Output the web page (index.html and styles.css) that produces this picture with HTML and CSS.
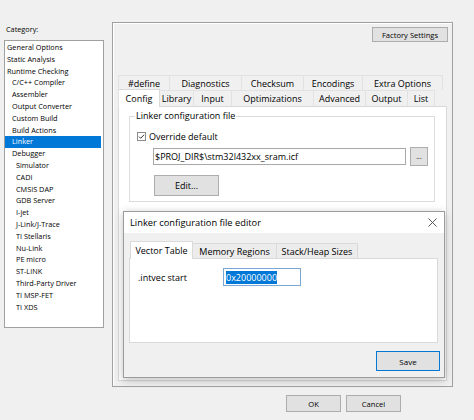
FILE: index.html
```html
<!DOCTYPE html>
<html lang="en">
<head>
  <meta charset="UTF-8">
  <title>Options for node</title>
  <link rel="stylesheet" href="styles.css">
</head>
<body>
  <div class="main">
    <aside class="category">
      <div class="category-label">Category:</div>
      <ul class="category-list">
        <li>General Options</li>
        <li>Static Analysis</li>
        <li>Runtime Checking</li>
        <li class="sub">C/C++ Compiler</li>
        <li class="sub">Assembler</li>
        <li class="sub">Output Converter</li>
        <li class="sub">Custom Build</li>
        <li class="sub">Build Actions</li>
        <li class="sub selected">Linker</li>
        <li class="sub">Debugger</li>
        <li class="sub2">Simulator</li>
        <li class="sub2">CADI</li>
        <li class="sub2">CMSIS DAP</li>
        <li class="sub2">GDB Server</li>
        <li class="sub2">I-jet</li>
        <li class="sub2">J-Link/J-Trace</li>
        <li class="sub2">TI Stellaris</li>
        <li class="sub2">Nu-Link</li>
        <li class="sub2">PE micro</li>
        <li class="sub2">ST-LINK</li>
        <li class="sub2">Third-Party Driver</li>
        <li class="sub2">TI MSP-FET</li>
        <li class="sub2">TI XDS</li>
      </ul>
    </aside>

    <section class="options">
      <div class="options-top">
        <div class="btn factory">Factory Settings</div>
      </div>

      <div class="tab-row back">
        <div class="tab">#define</div>
        <div class="tab">Diagnostics</div>
        <div class="tab">Checksum</div>
        <div class="tab">Encodings</div>
        <div class="tab">Extra Options</div>
      </div>
      <div class="tab-row front">
        <div class="tab active">Config</div>
        <div class="tab">Library</div>
        <div class="tab">Input</div>
        <div class="tab">Optimizations</div>
        <div class="tab">Advanced</div>
        <div class="tab">Output</div>
        <div class="tab">List</div>
      </div>

      <div class="tab-page">
        <fieldset class="group">
          <legend>Linker configuration file</legend>
          <div class="check-row">
            <svg width="9" height="9" viewBox="0 0 9 9">
              <rect x="0.5" y="0.5" width="8" height="8" fill="#fff" stroke="#8c8c8c"/>
              <path d="M2 4.6L3.7 6.3L7 2.8" fill="none" stroke="#333" stroke-width="1"/>
            </svg>
            <span>Override default</span>
          </div>
          <div class="file-row">
            <div class="field file-input">$PROJ_DIR$\stm32l432xx_sram.icf</div>
            <div class="btn browse">...</div>
          </div>
          <div class="btn edit-btn">Edit...</div>
        </fieldset>
      </div>

      <!-- modal editor window on top of the options page -->
      <div class="editor">
        <div class="editor-title">
          <span>Linker configuration file editor</span>
          <svg width="9" height="9" viewBox="0 0 9 9">
            <path d="M0.5 0.5L8.5 8.5M8.5 0.5L0.5 8.5" stroke="#444" stroke-width="0.9"/>
          </svg>
        </div>
        <div class="editor-body">
          <div class="dlg-tabs">
            <div class="dlg-tab active">Vector Table</div>
            <div class="dlg-tab">Memory Regions</div>
            <div class="dlg-tab">Stack/Heap Sizes</div>
          </div>
          <div class="dlg-page">
            <div class="dlg-row">
              <span class="dlg-label">.intvec start</span>
              <div class="field addr-input"><span class="sel">0x20000000</span></div>
            </div>
          </div>
          <div class="btn save-btn">Save</div>
        </div>
      </div>
    </section>
  </div>

  <div class="footer">
    <div class="btn footer-btn">OK</div>
    <div class="btn footer-btn">Cancel</div>
  </div>
</body>
</html>
```

FILE: styles.css
```css
body {
  margin: 0;
  width: 474px;
  height: 420px;
  overflow: hidden;
  background: #f0f0f0;
  font-family: "Open Sans", "Noto Sans", sans-serif;
  color: #000;
}
.main {
  display: flex;
  gap: 8px;
  padding: 22px 0 0 4px;
}

/* left category tree */
.category {
  width: 100px;
  display: flex;
  flex-direction: column;
}
.category-label {
  height: 18px;
  line-height: 14px;
  padding-left: 2px;
  font-size: 7.3px;
}
.category-list {
  list-style: none;
  margin: 0;
  padding: 1px 0 0;
  height: 288px;
  box-sizing: border-box;
  border: 1px solid #a0a0a0;
  background: #fff;
  font-size: 7.3px;
  line-height: 11.8px;
}
.category-list li {
  padding-left: 2px;
  margin-right: 2px;
  white-space: nowrap;
}
.category-list .sub {
  padding-left: 7px;
}
.category-list .sub2 {
  padding-left: 11px;
}
.category-list .selected {
  background: #0078d7;
  color: #fff;
}

/* right options frame */
.options {
  position: relative;
  width: 341px;
  height: 365px;
  box-sizing: border-box;
  border: 1px solid #a0a0a0;
  box-shadow: inset 1px 1px 0 #fff;
  padding: 4px 5px 0;
}
.options-top {
  display: flex;
  justify-content: flex-end;
  margin-right: -1px;
  margin-bottom: 33px;
}
.btn {
  box-sizing: border-box;
  display: flex;
  align-items: center;
  justify-content: center;
  background: #e1e1e1;
  border: 1px solid #adadad;
  font-size: 7.6px;
}
.factory {
  width: 76px;
  height: 15px;
}

.tab-row {
  display: grid;
  font-size: 9px;
}
.tab-row.back {
  grid-template-columns: 52px 72px 62px 59px 80px;
  height: 15px;
}
.tab-row.front {
  grid-template-columns: 42px 34px 38px 82px 52px 42px 27px;
  height: 16px;
}
.tab {
  display: flex;
  align-items: center;
  justify-content: center;
  box-sizing: border-box;
  border-top: 1px solid #e2e2e2;
  border-right: 1px solid #e2e2e2;
  background: #f0f0f0;
  white-space: nowrap;
}
.tab-row .tab:first-child {
  border-left: 1px solid #e2e2e2;
}
.tab.active {
  position: relative;
  z-index: 1;
  margin-top: -1px;
  margin-bottom: -1px;
  background: #fff;
  border-color: #d9d9d9;
}

.tab-page {
  height: 275px;
  box-sizing: border-box;
  background: #fff;
  border: 1px solid #d9d9d9;
  padding: 3px 11px 0 10px;
}
.group {
  margin: 0;
  min-width: 0;
  border: 1px solid #dcdcdc;
  padding: 0 6px 5px 7px;
}
.group legend {
  margin-left: -2px;
  padding: 0 1px;
  line-height: 12px;
  font-size: 9px;
}
.check-row {
  display: flex;
  align-items: center;
  gap: 3px;
  height: 12px;
  margin-top: 8px;
  font-size: 9px;
}
.file-row {
  display: flex;
  align-items: center;
  gap: 4px;
  margin: 5px 0 0 16px;
}
.field {
  box-sizing: border-box;
  display: flex;
  align-items: center;
  background: #fff;
  border: 1px solid #a8a8a8;
  font-size: 9px;
}
.file-input {
  width: 254px;
  height: 17px;
  padding-left: 1px;
}
.browse {
  width: 18px;
  height: 19px;
  font-size: 7px;
}
.edit-btn {
  width: 65px;
  height: 21px;
  margin: 9px 0 0 17px;
  font-size: 9px;
}

/* editor dialog */
.editor {
  position: absolute;
  left: 10px;
  top: 188px;
  width: 322px;
  height: 167px;
  box-sizing: border-box;
  display: flex;
  flex-direction: column;
  border: 1px solid #9b9b9b;
  background: #f0f0f0;
  box-shadow: 0 2px 8px rgba(0, 0, 0, 0.25);
}
.editor-title {
  height: 21px;
  display: flex;
  align-items: center;
  justify-content: space-between;
  padding: 0 7px 0 6px;
  background: #fff;
  font-size: 9.3px;
}
.editor-body {
  flex: 1;
  display: flex;
  flex-direction: column;
  padding: 8px 5px 0;
}
.dlg-tabs {
  display: flex;
  height: 17px;
  padding-left: 1px;
  font-size: 9px;
}
.dlg-tab {
  box-sizing: border-box;
  display: flex;
  align-items: center;
  justify-content: center;
  margin-top: 2px;
  border: 1px solid #dadada;
  border-bottom: none;
  border-left: none;
  background: #ececec;
  white-space: nowrap;
}
.dlg-tab:nth-child(1) {
  width: 63px;
}
.dlg-tab:nth-child(2) {
  width: 84px;
}
.dlg-tab:nth-child(3) {
  width: 81px;
}
.dlg-tab.active {
  position: relative;
  z-index: 1;
  margin-top: 0;
  margin-bottom: -1px;
  border-left: 1px solid #d9d9d9;
  background: #fff;
}
.dlg-page {
  width: 309px;
  height: 85px;
  box-sizing: border-box;
  background: #fff;
  border: 1px solid #d9d9d9;
  padding: 9px 0 0 8px;
}
.dlg-row {
  display: flex;
  align-items: center;
}
.dlg-label {
  width: 85px;
  font-size: 9px;
}
.addr-input {
  width: 78px;
  height: 18px;
  padding-left: 2px;
  border-color: #7aa7d6;
}
.sel {
  background: #0078d7;
  color: #fff;
}
.save-btn {
  align-self: flex-end;
  width: 64px;
  height: 20px;
  margin: 8px -1px 0 0;
  border-color: #0078d7;
  font-size: 8px;
}

.footer {
  display: flex;
  justify-content: flex-end;
  gap: 5px;
  margin-top: 8px;
  padding-right: 73px;
}
.footer-btn {
  width: 55px;
  height: 17px;
}
```
